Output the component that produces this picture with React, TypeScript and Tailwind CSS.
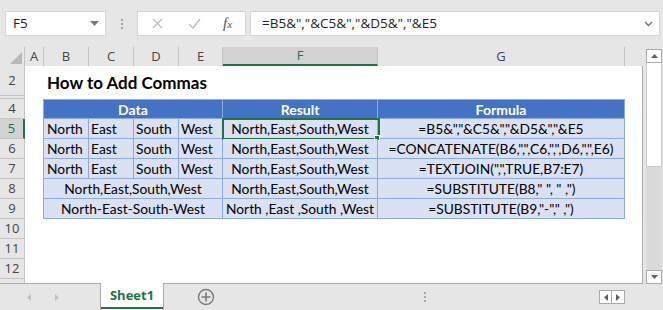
import React from "react";

const cellFont = "font-['Lato',sans-serif] text-[13.8px] text-black";

function RowHead({ n, active, last }: { n?: number; active?: boolean; last?: boolean }) {
  if (active) {
    return (
      <div className="w-[25px] h-full bg-[#d2d2d2] border-b border-[#c4c4c4] border-r-2 border-r-[#217346] flex items-center justify-center text-[13px] text-[#217346]">
        {n}
      </div>
    );
  }
  return (
    <div
      className={
        "w-[25px] h-full border-r border-[#c4c4c4] flex items-center justify-center text-[13px] text-[#444] " +
        (last ? "" : "border-b")
      }
    >
      {n}
    </div>
  );
}

function Sheet({ children }: { children?: React.ReactNode }) {
  return <div className="flex-1 h-full bg-white border-r border-[#ababab] flex">{children}</div>;
}

function DataRow({ n, f, formula }: { n: number; f: string; formula: string }) {
  const cell = "h-full border-r border-b border-[#8ea9db] bg-[#d9e1f2] flex items-center pt-[1px] " + cellFont;
  const active = n === 5;
  return (
    <div className="flex h-[20px]">
      <RowHead n={n} active={active} />
      <Sheet>
        <div className="pl-[18px] flex h-full">
          {n <= 7 ? (
            <>
              <div className={cell + " w-[46px] border-l pl-[3px]"}>North</div>
              <div className={cell + " w-[45px] pl-[2px]"}>East</div>
              <div className={cell + " w-[45px] pl-[2px]"}>South</div>
              <div className={cell + " w-[44px] pl-[2px]"}>West</div>
            </>
          ) : (
            <div className={cell + " w-[180px] border-l justify-center"}>
              {n === 8 ? "North,East,South,West" : "North-East-South-West"}
            </div>
          )}
          <div className={cell + " w-[155px] justify-center whitespace-nowrap relative"}>
            {f}
            {active && (
              <>
                <div className="absolute -left-[1px] -top-[1px] w-[158px] h-[22px] border-2 border-[#217346]" />
                <div className="absolute -right-[3px] -bottom-[3px] w-[6px] h-[6px] bg-[#217346] border border-white" />
              </>
            )}
          </div>
          <div className={cell + " w-[247px] justify-center whitespace-nowrap"}>{formula}</div>
        </div>
      </Sheet>
    </div>
  );
}

function EmptyRow({ n }: { n: number }) {
  return (
    <div className="flex h-[20px]">
      <RowHead n={n} />
      <Sheet />
    </div>
  );
}

function ColHead({ label, w, active }: { label: string; w: string; active?: boolean }) {
  return (
    <div
      className={
        w +
        " h-full border-r border-[#c4c4c4] flex items-center justify-center text-[13px] " +
        (active ? "bg-[#d2d2d2] text-[#217346] border-b-2 border-b-[#217346]" : "text-[#444]")
      }
    >
      {label}
    </div>
  );
}

export default function App() {
  const rows = [
    { n: 5, f: "North,East,South,West", formula: '=B5&","&C5&","&D5&","&E5' },
    { n: 6, f: "North,East,South,West", formula: '=CONCATENATE(B6,",",C6,",",D6,",",E6)' },
    { n: 7, f: "North,East,South,West", formula: '=TEXTJOIN(",",TRUE,B7:E7)' },
    { n: 8, f: "North,East,South,West", formula: '=SUBSTITUTE(B8," ", " ,")' },
    { n: 9, f: "North ,East ,South ,West", formula: '=SUBSTITUTE(B9,"-"," ,")' },
  ];

  return (
    <div className="w-[663px] h-[310px] bg-[#e6e6e6] flex flex-col overflow-hidden font-['Open_Sans',sans-serif]">
      {/* formula bar */}
      <div className="h-[47px] flex items-start pt-[11px] pl-[5px]">
        <div className="w-[101px] h-[25px] bg-white border border-[#d6d6d6] flex items-center justify-between pl-[7px] pr-[6px] text-[13.5px] text-[#222]">
          <span>F5</span>
          <svg width="9" height="5" viewBox="0 0 9 5">
            <path d="M0 0h9L4.5 5z" fill="#7a7a7a" />
          </svg>
        </div>
        <div className="w-[31px] h-[25px] flex flex-col items-center justify-center gap-[2px]">
          <span className="w-[2px] h-[2px] bg-[#a0a0a0]" />
          <span className="w-[2px] h-[2px] bg-[#a0a0a0]" />
          <span className="w-[2px] h-[2px] bg-[#a0a0a0]" />
        </div>
        <div className="w-[109px] h-[25px] bg-white border border-[#d6d6d6] flex items-center">
          <svg className="ml-[14px]" width="11" height="11" viewBox="0 0 11 11">
            <path d="M1 1l9 9M10 1l-9 9" stroke="#bdbdbd" strokeWidth="1.4" />
          </svg>
          <svg className="ml-[25px]" width="13" height="11" viewBox="0 0 13 11">
            <path d="M1 6l4 4 7-9" stroke="#bdbdbd" strokeWidth="1.4" fill="none" />
          </svg>
          <span className="ml-[22px] font-['Liberation_Serif',serif] italic text-[15px] text-[#555] leading-none">
            f<span className="text-[11px]">x</span>
          </span>
        </div>
        <div className="ml-[4px] w-[410px] h-[25px] bg-white border border-[#d6d6d6] flex items-center justify-between pl-[11px] pr-[6px] text-[13.5px] text-[#222]">
          <span>{'=B5&","&C5&","&D5&","&E5'}</span>
          <svg width="9" height="6" viewBox="0 0 9 6">
            <path d="M1 1l3.5 3.5L8 1" stroke="#777" strokeWidth="1.5" fill="none" />
          </svg>
        </div>
      </div>

      {/* grid + vertical scrollbar */}
      <div className="flex h-[237px]">
        <div className="w-[643px] flex flex-col">
          <div className="flex h-[19px]">
            <div className="w-[25px] h-full border-r border-[#c4c4c4] flex items-end justify-end pr-[2px] pb-[2px]">
              <svg width="12" height="12" viewBox="0 0 12 12">
                <path d="M12 0v12H0z" fill="#b9b9b9" />
              </svg>
            </div>
            <ColHead label="A" w="w-[19px]" />
            <ColHead label="B" w="w-[45px]" />
            <ColHead label="C" w="w-[45px]" />
            <ColHead label="D" w="w-[45px]" />
            <ColHead label="E" w="w-[44px]" />
            <ColHead label="F" w="w-[155px]" active />
            <ColHead label="G" w="w-[247px]" />
          </div>

          <div className="h-[218px] flex flex-col border-b border-[#ababab]">
            <div className="flex h-[30px]">
              <RowHead n={2} />
              <div className="flex-1 h-full bg-white border-r border-[#ababab] flex items-center pl-[22px] pt-[3px]">
                <span className="font-['Lato',sans-serif] font-bold text-[17px] text-black">How to Add Commas</span>
              </div>
            </div>
            <div className="flex h-[3px]">
              <RowHead />
              <Sheet />
            </div>
            <div className="flex h-[20px]">
              <RowHead n={4} />
              <Sheet>
                <div className="pl-[18px] flex h-full">
                  <div className="w-[180px] h-full border border-[#8ea9db] bg-[#4472c4] flex items-center justify-center font-['Lato',sans-serif] font-bold text-[14px] text-white">
                    Data
                  </div>
                  <div className="w-[155px] h-full border-t border-r border-b border-[#8ea9db] bg-[#4472c4] flex items-center justify-center font-['Lato',sans-serif] font-bold text-[14px] text-white">
                    Result
                  </div>
                  <div className="w-[247px] h-full border-t border-r border-b border-[#8ea9db] bg-[#4472c4] flex items-center justify-center font-['Lato',sans-serif] font-bold text-[14px] text-white">
                    Formula
                  </div>
                </div>
              </Sheet>
            </div>
            {rows.map((r) => (
              <DataRow key={r.n} n={r.n} f={r.f} formula={r.formula} />
            ))}
            {[10, 11, 12].map((n) => (
              <EmptyRow key={n} n={n} />
            ))}
            <div className="flex flex-1">
              <RowHead last />
              <Sheet />
            </div>
          </div>
        </div>

        <div className="w-[20px] pl-[3px] pt-[2px] flex flex-col">
          <div className="w-[16px] h-[14px] bg-white border border-[#ababab] flex items-center justify-center">
            <svg width="7" height="4" viewBox="0 0 7 4">
              <path d="M0 4h7L3.5 0z" fill="#606060" />
            </svg>
          </div>
          <div className="w-[16px] h-[104px] bg-white border-x border-b border-[#c8c8c8]" />
          <div className="w-[16px] flex-1 bg-[#dadada]" />
          <div className="w-[16px] h-[14px] bg-white border border-[#ababab] flex items-center justify-center">
            <svg width="7" height="4" viewBox="0 0 7 4">
              <path d="M0 0h7L3.5 4z" fill="#606060" />
            </svg>
          </div>
        </div>
      </div>

      {/* sheet tabs */}
      <div className="h-[26px] flex items-stretch">
        <div className="w-[100px] flex items-center">
          <svg className="ml-[27px]" width="4" height="7" viewBox="0 0 4 7">
            <path d="M4 0v7L0 3.5z" fill="#c0c0c0" />
          </svg>
          <svg className="ml-[24px]" width="4" height="7" viewBox="0 0 4 7">
            <path d="M0 0v7l4-3.5z" fill="#c0c0c0" />
          </svg>
        </div>
        <div className="w-[64px] -mt-[1px] bg-white border-x border-[#ababab] flex flex-col">
          <div className="flex-1 flex items-center justify-center font-bold text-[13px] text-[#217346] pt-[1px]">
            Sheet1
          </div>
          <div className="h-[2px] bg-[#217346] mb-[1px]" />
        </div>
        <div className="w-[84px] flex items-center justify-center">
          <svg width="18" height="18" viewBox="0 0 18 18">
            <circle cx="9" cy="9" r="7.5" stroke="#7a7a7a" strokeWidth="1.4" fill="none" />
            <path d="M9 4.5v9M4.5 9h9" stroke="#7a7a7a" strokeWidth="1.6" />
          </svg>
        </div>
        <div className="w-[351px] flex flex-col items-center justify-center gap-[2px]">
          <span className="w-[2px] h-[2px] bg-[#a8a8a8] ml-[2px]" />
          <span className="w-[2px] h-[2px] bg-[#a8a8a8] ml-[2px]" />
          <span className="w-[2px] h-[2px] bg-[#a8a8a8] ml-[2px]" />
        </div>
        <div className="flex items-center">
          <div className="w-[13px] h-[14px] bg-white border border-[#ababab] flex items-center justify-center">
            <svg width="4" height="7" viewBox="0 0 4 7">
              <path d="M4 0v7L0 3.5z" fill="#606060" />
            </svg>
          </div>
          <div className="w-[13px] h-[14px] bg-white border-y border-r border-[#ababab] flex items-center justify-center">
            <svg width="4" height="7" viewBox="0 0 4 7">
              <path d="M0 0v7l4-3.5z" fill="#606060" />
            </svg>
          </div>
        </div>
      </div>
    </div>
  );
}
